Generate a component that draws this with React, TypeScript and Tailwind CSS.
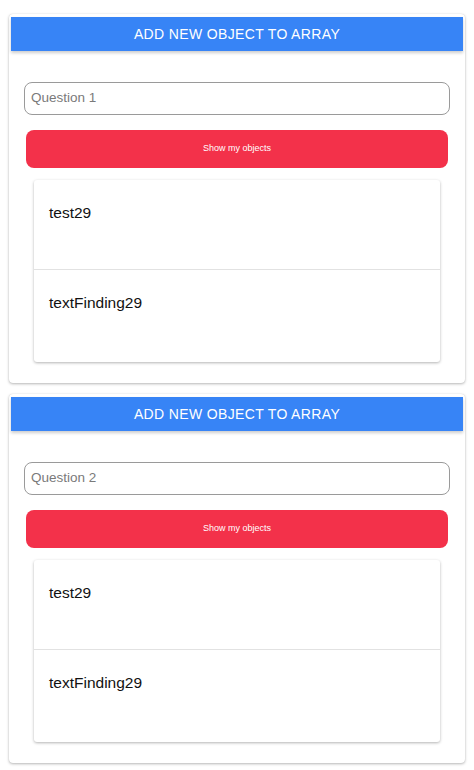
import React from "react";

const items = ["test29", "textFinding29"];

function Card({ q }: { q: string }) {
  return (
    <div className="mx-[9px] rounded-[4px] bg-white shadow-[0_1px_3px_rgba(0,0,0,0.28),0_0_1px_rgba(0,0,0,0.15)] pt-[3px] pb-[21px]">
      <div className="mx-[2px] h-[34px] bg-[#3784f6] flex items-center justify-center text-white text-[14px] tracking-[0.35px] shadow-[0_2px_3px_rgba(0,0,0,0.2)]">
        ADD NEW OBJECT TO ARRAY
      </div>
      <div className="mx-[15px] mt-[31px] h-[33px] rounded-[8px] border border-[#9a9a9a] flex items-center px-[6px]">
        <input
          className="w-full outline-none bg-transparent text-[13.5px] text-[#333] placeholder:text-[#7a7a7a]"
          placeholder={q}
        />
      </div>
      <button className="mx-[17px] mt-[15px] h-[38px] w-[calc(100%-34px)] rounded-[8px] bg-[#f3314a] text-white text-[9px] flex items-center justify-center">
        Show my objects
      </button>
      <div className="mx-[25px] mt-[12px] rounded-[3px] bg-white shadow-[0_1px_3px_rgba(0,0,0,0.3)]">
        {items.map((t, i) => (
          <div
            key={t}
            className={
              i === 0
                ? "h-[90px] pl-[15px] pt-[21px] border-b border-[#e2e2e2] text-[15.5px] text-[#111]"
                : "h-[92px] pl-[15px] pt-[21px] text-[15.5px] text-[#111]"
            }
          >
            {t}
          </div>
        ))}
      </div>
    </div>
  );
}

export default function App() {
  return (
    <div
      className="w-[474px] min-h-[770px] bg-white pt-[14px] pb-[7px] flex flex-col gap-[11px]"
      style={{ fontFamily: '"Liberation Sans", Arial, sans-serif' }}
    >
      <Card q="Question 1" />
      <Card q="Question 2" />
    </div>
  );
}
